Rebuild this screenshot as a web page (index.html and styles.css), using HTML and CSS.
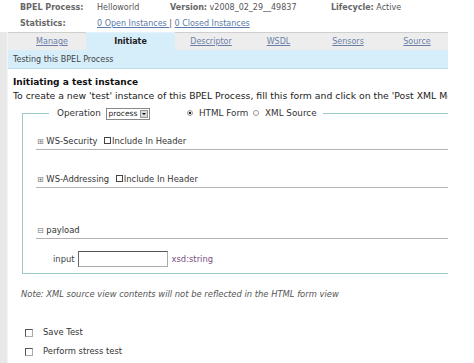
FILE: index.html
```html
<!DOCTYPE html>
<html lang="en">
<head>
    <meta charset="UTF-8">
    <title>BPEL Process - Initiate</title>
    <link rel="stylesheet" href="styles.css">
</head>
<body>
    <div id="process-info">
        <span class="label">BPEL Process:</span>
        <span class="value">Helloworld</span>
        <span class="value"><b class="label">Version:</b> v2008_02_29__49837</span>
        <span class="value"><b class="label">Lifecycle:</b> Active</span>
        <span class="label">Statistics:</span>
        <span class="value stats"><a href="#">0 Open Instances </a> | <a href="#">0 Closed Instances</a></span>
    </div>

    <div id="main">
        <div id="side-strip"></div>
        <div id="content">
            <div id="tabs">
                <a class="tab tab-manage" href="#">Manage</a>
                <span class="tab tab-initiate active">Initiate</span>
                <a class="tab tab-descriptor" href="#">Descriptor</a>
                <a class="tab tab-wsdl" href="#">WSDL</a>
                <a class="tab tab-sensors" href="#">Sensors</a>
                <a class="tab tab-source" href="#">Source</a>
            </div>
            <div id="sub-bar">Testing this BPEL Process</div>

            <div id="page-body">
                <h1 class="title">Initiating a test instance</h1>
                <p class="intro">To create a new 'test' instance of this BPEL Process, fill this form and click on the 'Post XML Message' button.</p>

                <fieldset id="test-form">
                    <legend>
                        <span>Operation</span>
                        <span class="fake-select">process<span class="arrow"></span></span>
                        <span class="view-mode">
                            <input type="radio" name="mode" checked> HTML Form
                            <input type="radio" name="mode"> XML Source
                        </span>
                    </legend>

                    <div class="section sec-security">
                        <span class="toggle">&#x229E;</span> WS-Security <input type="checkbox" class="hdr-check">Include In Header
                    </div>
                    <div class="section sec-addressing">
                        <span class="toggle">&#x229E;</span> WS-Addressing <input type="checkbox" class="hdr-check">Include In Header
                    </div>
                    <div class="section sec-payload">
                        <span class="toggle">&#x229F;</span> payload
                    </div>
                    <div class="param-row">
                        <span>input</span>
                        <input type="text" class="param-input">
                        <span class="xsd-type">xsd:string</span>
                    </div>
                </fieldset>

                <p class="note">Note: XML source view contents will not be reflected in the HTML form view</p>

                <div class="option-row first">
                    <input type="checkbox" class="opt-check"> <span>Save Test</span>
                </div>
                <div class="option-row">
                    <input type="checkbox" class="opt-check"> <span>Perform stress test</span>
                </div>
            </div>
        </div>
    </div>
</body>
</html>
```

FILE: styles.css
```css
body {
    margin: 0;
    font-family: "DejaVu Sans", Verdana, sans-serif;
    font-size: 8px;
    line-height: 13px;
    color: #333;
    background-color: #fff;
}

#process-info {
    display: grid;
    grid-template-columns: 77px 73px 161px auto;
    padding: 1px 0 0 20px;
    height: 32px;
    box-sizing: border-box;
}

#process-info .label {
    font-weight: bold;
    color: #666;
}

#process-info .value {
    color: #555;
}

#process-info .stats {
    grid-column: 2 / 5;
}

#process-info a {
    color: #5a78a8;
}

#main {
    display: flex;
    width: 448px;
    height: 331px;
    overflow: hidden;
}

#side-strip {
    width: 7px;
    flex-shrink: 0;
    background-color: #e8e8e8;
    border-right: 1px solid #f4f4f4;
}

#content {
    flex: 1;
    min-width: 0;
    overflow: hidden;
}

#tabs {
    display: flex;
    height: 18px;
    box-sizing: border-box;
    border-top: 1px solid #cfcfcf;
    background-color: #ededed;
    padding-left: 10px;
}

.tab {
    display: block;
    text-align: center;
    line-height: 17px;
    color: #6a7fa8;
}

.tab-manage { width: 68px; }
.tab-initiate { width: 89px; }
.tab-descriptor { width: 72px; }
.tab-wsdl { width: 63px; }
.tab-sensors { width: 76px; }
.tab-source { width: 62px; }

.tab.active {
    background-color: #d6edfa;
    color: #222;
    font-weight: bold;
    border-top: 1px solid #e4f2fb;
    margin-top: -1px;
}

#sub-bar {
    height: 19px;
    box-sizing: border-box;
    background-color: #d6edfa;
    border-bottom: 1px solid #bfdcec;
    padding-left: 5px;
    line-height: 19px;
    color: #444;
}

#page-body {
    padding-left: 5px;
    white-space: nowrap;
    font-size: 8.4px;
}

.title {
    margin: 7px 0 0;
    font-size: 9px;
    line-height: 13px;
    color: #111;
}

.intro {
    margin: 0;
    color: #222;
    font-size: 9.3px;
}

#test-form {
    margin: 4px 0 0 9px;
    padding: 0 0 6px 0;
    border: 1px solid #9ccaca;
    border-right: none;
}

#test-form legend {
    margin-left: 26px;
    padding: 0 6px 0 8px;
    line-height: 15px;
    font-size: 8.8px;
    color: #333;
}

.fake-select {
    display: inline-flex;
    align-items: center;
    height: 10px;
    line-height: 10px;
    border: 1px solid #888;
    padding-left: 2px;
    margin-left: 2px;
    font-size: 7.5px;
    vertical-align: middle;
    color: #222;
}

.arrow {
    display: inline-block;
    width: 8px;
    height: 8px;
    margin: 0 1px 0 3px;
    background-color: #d8d8d8;
    border: 1px solid #999;
    box-sizing: border-box;
    position: relative;
}

.arrow::after {
    content: "";
    position: absolute;
    left: 1px;
    top: 2px;
    border-left: 2px solid transparent;
    border-right: 2px solid transparent;
    border-top: 2px solid #111;
}

.view-mode {
    margin-left: 34px;
}

input[type="radio"] {
    appearance: none;
    width: 6px;
    height: 6px;
    margin: 0 3px 0 0;
    border: 1px solid #999;
    border-radius: 50%;
    vertical-align: middle;
    position: relative;
    top: -1px;
}

input[type="radio"]:checked {
    background: radial-gradient(circle, #222 0 1.4px, #fff 1.6px);
}

.view-mode input:last-child {
    margin-left: 2px;
}

.section {
    margin-left: 13px;
    height: 15px;
    box-sizing: border-box;
    border-bottom: 1px solid #b3b3b3;
    padding-left: 1px;
    color: #333;
}

.sec-security { margin-top: 14px; }
.sec-addressing { margin-top: 23px; }
.sec-payload { margin-top: 36px; }

.toggle {
    color: #777;
    font-size: 8px;
}

.hdr-check {
    appearance: none;
    width: 7px;
    height: 7px;
    margin: 0 1px 0 4px;
    border: 1px solid #444;
    vertical-align: middle;
    position: relative;
    top: -1px;
}

.param-row {
    margin: 12px 0 0 30px;
    display: flex;
    align-items: center;
    height: 16px;
    color: #444;
}

.param-input {
    width: 90px;
    height: 16px;
    box-sizing: border-box;
    margin: 0 4px 0 3px;
    border: 1px solid #aaa;
    border-top-color: #555;
    border-left-color: #666;
}

.xsd-type {
    color: #7a4c86;
}

.note {
    margin: 14px 0 0 8px;
    font-style: italic;
    color: #555;
}

.option-row {
    margin-left: 12px;
    display: flex;
    align-items: center;
    height: 13px;
    margin-top: 6px;
    color: #333;
}

.option-row.first {
    margin-top: 25px;
}

.opt-check {
    appearance: none;
    width: 8px;
    height: 8px;
    margin: 0 10px 0 0;
    border: 1px solid #555;
    border-bottom-color: #aaa;
    border-right-color: #aaa;
}
```
